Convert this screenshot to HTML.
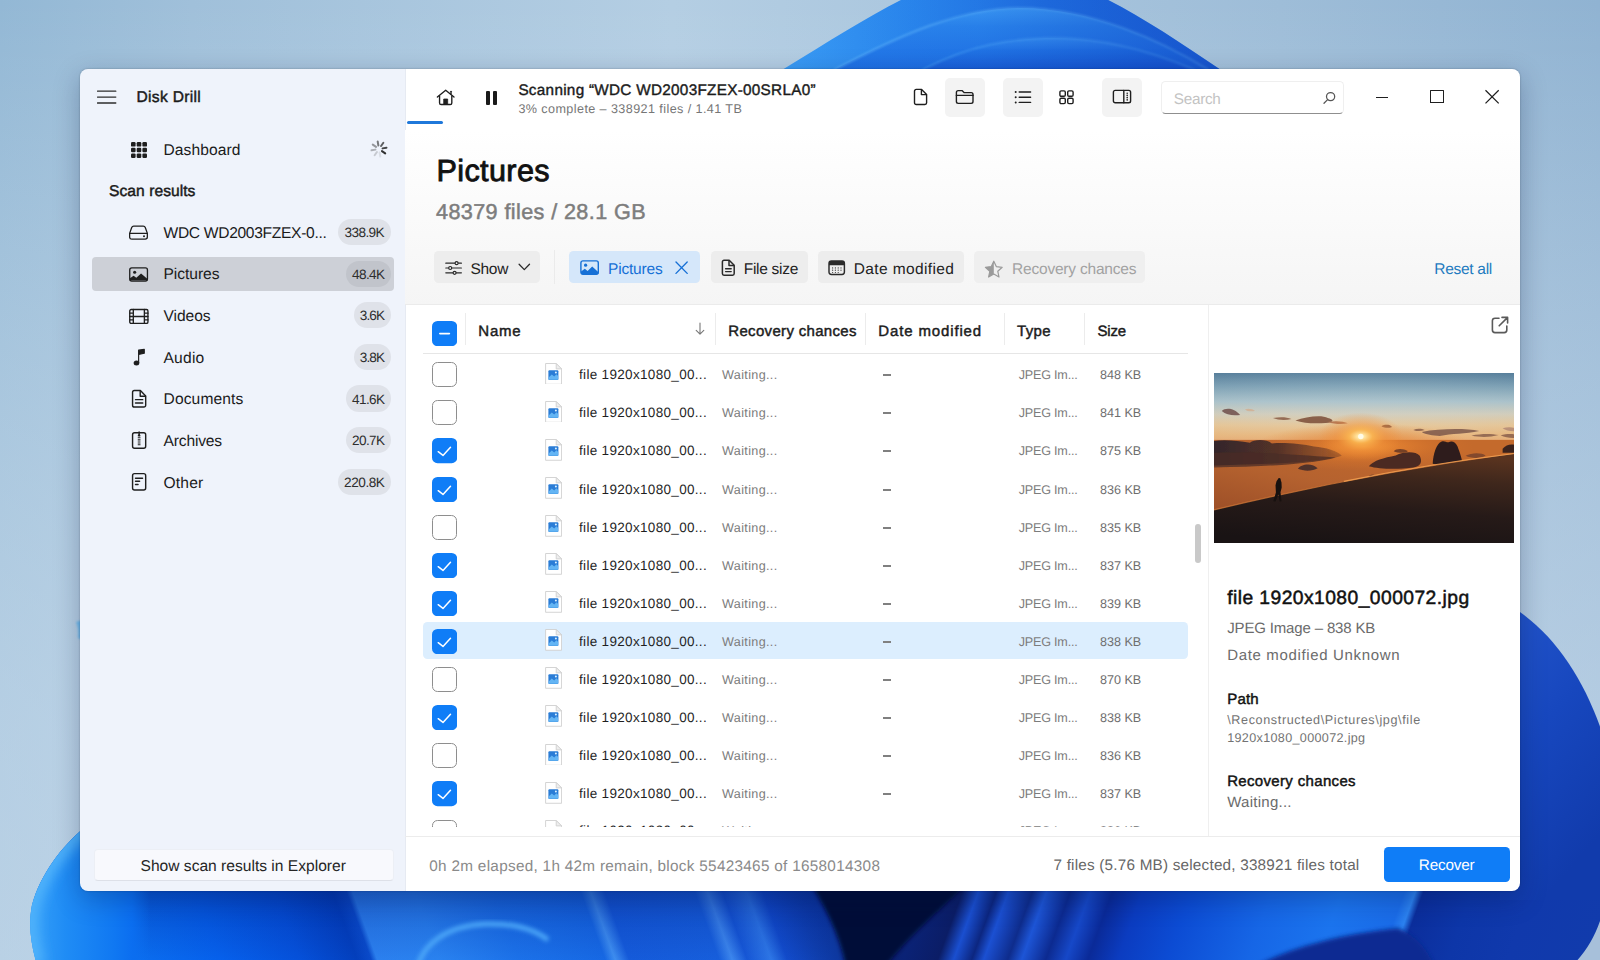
<!DOCTYPE html>
<html lang="en"><head><meta charset="utf-8"><title>Disk Drill</title>
<style>
html,body{margin:0;padding:0;}
body{width:1600px;height:960px;overflow:hidden;position:relative;background:#a9c4dc;font-family:"Liberation Sans",sans-serif;text-rendering:geometricPrecision;}
.b{position:absolute;box-sizing:border-box;}
.t{position:absolute;white-space:nowrap;}
#win{position:absolute;left:0;top:0;width:1600px;height:960px;clip-path:inset(69px 80px 69px 80px round 8px);}
</style></head><body>

<svg class="b" style="left:0;top:0" width="1600" height="960" viewBox="0 0 1600 960">
<defs>
<linearGradient id="bgx" x1="0" y1="0" x2="1" y2="0">
<stop offset="0" stop-color="#93b8d5"/><stop offset="0.12" stop-color="#a0c0da"/><stop offset="0.42" stop-color="#b4cee3"/>
<stop offset="0.8" stop-color="#9ebdd8"/><stop offset="1" stop-color="#90b3d2"/></linearGradient>
<linearGradient id="bgy" x1="0" y1="0" x2="0" y2="1">
<stop offset="0" stop-color="#ffffff" stop-opacity="0"/><stop offset="0.75" stop-color="#dfeaf5" stop-opacity="0.45"/><stop offset="1" stop-color="#dfeaf5" stop-opacity="0.5"/></linearGradient>
<linearGradient id="p1" x1="0" y1="0" x2="1" y2="0"><stop offset="0" stop-color="#3a9cf5"/><stop offset="0.3" stop-color="#2a88ee"/><stop offset="0.6" stop-color="#2174e4"/><stop offset="1" stop-color="#2070e2"/></linearGradient>
<linearGradient id="p2" x1="0" y1="0" x2="1" y2="0.3"><stop offset="0" stop-color="#3d9ef6"/><stop offset="0.5" stop-color="#2176e6"/><stop offset="1" stop-color="#185cd6"/></linearGradient>
<linearGradient id="p3" x1="0" y1="0" x2="1" y2="0.3"><stop offset="0" stop-color="#2f8af0"/><stop offset="0.5" stop-color="#1b68df"/><stop offset="1" stop-color="#1553cf"/></linearGradient>
<linearGradient id="pr" x1="0" y1="0" x2="0.4" y2="1"><stop offset="0" stop-color="#2456cc"/><stop offset="0.5" stop-color="#1747be"/><stop offset="1" stop-color="#113bac"/></linearGradient>
<linearGradient id="botA" gradientUnits="userSpaceOnUse" x1="30" y1="0" x2="870" y2="0" gradientTransform="translate(-330 0) skewX(20)"><stop offset="0.0000" stop-color="#3ea6f9"/><stop offset="0.0214" stop-color="#2090f6"/><stop offset="0.0833" stop-color="#0c72f1"/><stop offset="0.2024" stop-color="#0662ee"/><stop offset="0.2976" stop-color="#0552dc"/><stop offset="0.3667" stop-color="#0340be"/><stop offset="0.3833" stop-color="#0a4ccc"/><stop offset="0.3905" stop-color="#2c82f1"/><stop offset="0.4643" stop-color="#2a84f2"/><stop offset="0.5595" stop-color="#1c73eb"/><stop offset="0.6619" stop-color="#176ae6"/><stop offset="0.6738" stop-color="#3f90f2"/><stop offset="0.6905" stop-color="#155cdc"/><stop offset="0.7976" stop-color="#1760de"/><stop offset="0.8131" stop-color="#3d88ef"/><stop offset="0.8310" stop-color="#1658d8"/><stop offset="0.8595" stop-color="#2e78e8"/><stop offset="0.8786" stop-color="#124ccc"/><stop offset="0.9167" stop-color="#0f3fae"/><stop offset="0.9524" stop-color="#0c3498"/><stop offset="1.0000" stop-color="#0a2a88"/></linearGradient>
<linearGradient id="botB" gradientUnits="userSpaceOnUse" x1="800" y1="0" x2="1600" y2="0" gradientTransform="translate(337 0) skewX(-20)"><stop offset="0.0000" stop-color="#081c66"/><stop offset="0.1000" stop-color="#081c66"/><stop offset="0.1437" stop-color="#0a2276"/><stop offset="0.1875" stop-color="#0b1d66"/><stop offset="0.2075" stop-color="#1a4fd0"/><stop offset="0.2300" stop-color="#0c2680"/><stop offset="0.2450" stop-color="#1b50d2"/><stop offset="0.2750" stop-color="#0e2c8c"/><stop offset="0.2925" stop-color="#1d55d6"/><stop offset="0.3225" stop-color="#0c2a90"/><stop offset="0.3475" stop-color="#1648c8"/><stop offset="0.3750" stop-color="#0a2a98"/><stop offset="0.4125" stop-color="#0b3cc0"/><stop offset="0.4750" stop-color="#0c4cd4"/><stop offset="0.5750" stop-color="#1666e6"/><stop offset="0.6625" stop-color="#1b74ee"/><stop offset="0.7400" stop-color="#1a6ce8"/><stop offset="0.7538" stop-color="#2c82f0"/><stop offset="0.7638" stop-color="#0b2e9c"/><stop offset="0.8250" stop-color="#0d36a8"/><stop offset="0.9000" stop-color="#1039ac"/><stop offset="1.0000" stop-color="#113bac"/></linearGradient>
<linearGradient id="p2v" gradientUnits="userSpaceOnUse" x1="0" y1="8" x2="0" y2="70"><stop offset="0" stop-color="#3c9cf6"/><stop offset="0.3" stop-color="#2a86ee"/><stop offset="1" stop-color="#1f72e6"/></linearGradient>
<linearGradient id="p3v" gradientUnits="userSpaceOnUse" x1="0" y1="38" x2="0" y2="70"><stop offset="0" stop-color="#3592f3"/><stop offset="0.4" stop-color="#2278e8"/><stop offset="1" stop-color="#1a62dc"/></linearGradient>
<linearGradient id="pdark" gradientUnits="userSpaceOnUse" x1="782" y1="0" x2="1221" y2="0"><stop offset="0" stop-color="#0a2fb0" stop-opacity="0"/><stop offset="0.45" stop-color="#0a2fb0" stop-opacity="0.08"/><stop offset="1" stop-color="#0a2fb0" stop-opacity="0.42"/></linearGradient>
<linearGradient id="topdark" gradientUnits="userSpaceOnUse" x1="0" y1="885" x2="0" y2="965"><stop offset="0" stop-color="#02208a" stop-opacity="0.35"/><stop offset="1" stop-color="#02208a" stop-opacity="0"/></linearGradient>
<linearGradient id="lpet" gradientUnits="userSpaceOnUse" x1="30" y1="0" x2="150" y2="0"><stop offset="0" stop-color="#36a0f8"/><stop offset="0.3" stop-color="#1f8cf5"/><stop offset="0.7" stop-color="#1078f2"/><stop offset="0.85" stop-color="#0b6ef0"/><stop offset="1" stop-color="#0b6ef0" stop-opacity="0"/></linearGradient>
<clipPath id="lpc"><path d="M84,828 C62,846 40,875 32,905 C28,925 31,945 37,965 L150,965 L150,828 Z"/></clipPath>
<filter id="bl1"><feGaussianBlur stdDeviation="0.8"/></filter>
<filter id="bl2"><feGaussianBlur stdDeviation="2"/></filter>
<filter id="bl6"><feGaussianBlur stdDeviation="6"/></filter>
</defs>
<rect width="1600" height="960" fill="url(#bgx)"/>
<rect width="1600" height="960" fill="url(#bgy)"/>
<!-- top bloom -->
<path d="M782,70 C880,10 940,-30 1005,-30 C1070,-30 1140,15 1221,70 Z" fill="url(#p1)"/>
<path d="M834,70 C900,35 960,8 1020,8 C1090,8 1160,40 1209,70 Z" fill="url(#p2v)"/>
<path d="M834,70 C900,35 960,8 1020,8 C1090,8 1160,40 1209,70" stroke="#58b0fa" stroke-width="1.6" fill="none" stroke-opacity="0.8" filter="url(#bl1)"/>
<path d="M922,70 C970,45 1010,38 1055,38 C1110,38 1160,55 1195,70 Z" fill="url(#p3v)"/>
<path d="M922,70 C970,45 1010,38 1055,38 C1110,38 1160,55 1195,70" stroke="#4ea8f8" stroke-width="1.4" fill="none" stroke-opacity="0.75" filter="url(#bl1)"/>
<path d="M782,70 C880,10 940,-30 1005,-30 C1070,-30 1140,15 1221,70 Z" fill="url(#pdark)"/>
<!-- right petal -->
<!-- bottom -->
<rect x="860" y="880" width="750" height="85" fill="url(#botB)"/>
<path d="M1500,600 L1520,612 C1560,640 1590,690 1606,745 L1606,900 L1500,900 Z" fill="url(#pr)"/>
<path d="M1606,896 C1601,928 1589,948 1573,965 L1610,965 L1610,896 Z" fill="#a7c0da"/>
<path d="M84,828 C62,846 40,875 32,905 C28,925 31,945 37,965 L872,965 L872,880 L84,880 Z" fill="url(#botA)"/>
<path d="M84,828 C62,846 40,875 32,905 C28,925 31,945 37,965 L830,965 L830,880 L84,880 Z" fill="url(#topdark)"/>
<path d="M84,828 C62,846 40,875 32,905 C28,925 31,945 37,965 L150,965 L150,828 Z" fill="url(#lpet)"/>
<g clip-path="url(#lpc)"><path d="M86,826 C62,846 40,875 32,905 C28,925 31,945 37,965" stroke="#4fb2fb" stroke-width="16" fill="none" filter="url(#bl6)"/></g>
<path d="M76,622 C78,626 79,632 78,638 L82,640 L82,620 Z" fill="#62b6ee" opacity="0.85" filter="url(#bl1)"/>
<path d="M806,876 L976,876 C945,905 910,935 884,968 L846,968 C840,935 824,905 806,876 Z" fill="#040c38" filter="url(#bl2)"/>
<path d="M418,965 C424,945 445,926 485,924 C515,923 535,930 548,940" stroke="#4ba6f8" stroke-width="5" fill="none" filter="url(#bl2)"/>
<path d="M1258,965 C1290,948 1340,934 1398,928 C1415,935 1428,950 1434,965 Z" fill="#0a2a92" filter="url(#bl2)"/>
</svg>
<div class="b" style="left:80px;top:69px;width:1440px;height:822px;border-radius:8px;box-shadow:0 8px 26px 1px rgba(0,20,60,0.26),0 0 2px rgba(0,0,0,0.3);"></div>

<div id="win">
<div class="b" style="left:80px;top:69px;width:325.6px;height:822px;background:#eff3fb;border-radius:0px;"></div>
<div class="b" style="left:405.6px;top:69px;width:1114.4px;height:822px;background:#ffffff;border-radius:0px;"></div>
<div class="b" style="left:404.6px;top:69px;width:1.0px;height:822px;background:#e6eaf2;border-radius:0px;"></div>
<svg class="b" style="left:97px;top:90px;" width="20" height="14" viewBox="0 0 20 14"><path d="M0.5,1.2H18.8M0.5,7.1H18.8M0.5,13H18.8" stroke="#2e2e2e" stroke-width="1.3" fill="none" stroke-linecap="round"/></svg>
<span class="t" style="top:87px;font-size:15.6px;line-height:21px;color:#1b1b1b;letter-spacing:0.298px;left:136.50px;-webkit-text-stroke:0.45px #1b1b1b;">Disk Drill</span>
<svg class="b" style="left:131px;top:142px;" width="16" height="16" viewBox="0 0 16 16"><rect x="0.0" y="0.0" width="4.6" height="4.6" rx="1.2" fill="#1f1f1f"/><rect x="5.7" y="0.0" width="4.6" height="4.6" rx="1.2" fill="#1f1f1f"/><rect x="11.4" y="0.0" width="4.6" height="4.6" rx="1.2" fill="#1f1f1f"/><rect x="0.0" y="5.7" width="4.6" height="4.6" rx="1.2" fill="#1f1f1f"/><rect x="5.7" y="5.7" width="4.6" height="4.6" rx="1.2" fill="#1f1f1f"/><rect x="11.4" y="5.7" width="4.6" height="4.6" rx="1.2" fill="#1f1f1f"/><rect x="0.0" y="11.4" width="4.6" height="4.6" rx="1.2" fill="#1f1f1f"/><rect x="5.7" y="11.4" width="4.6" height="4.6" rx="1.2" fill="#1f1f1f"/><rect x="11.4" y="11.4" width="4.6" height="4.6" rx="1.2" fill="#1f1f1f"/></svg>
<span class="t" style="top:140px;font-size:15.6px;line-height:21px;color:#1b1b1b;letter-spacing:0.076px;left:163.50px;">Dashboard</span>
<svg class="b" style="left:369.2px;top:138.9px;" width="20" height="20" viewBox="0 0 20 20"><g transform="translate(10,10)"><line x1="0" y1="-3.6" x2="0" y2="-7.6" stroke="#262626" stroke-opacity="0.95" stroke-width="2" stroke-linecap="round" transform="rotate(125)"/><line x1="0" y1="-3.6" x2="0" y2="-7.6" stroke="#262626" stroke-opacity="0.85" stroke-width="2" stroke-linecap="round" transform="rotate(80)"/><line x1="0" y1="-3.6" x2="0" y2="-7.6" stroke="#262626" stroke-opacity="0.72" stroke-width="2" stroke-linecap="round" transform="rotate(35)"/><line x1="0" y1="-3.6" x2="0" y2="-7.6" stroke="#262626" stroke-opacity="0.6" stroke-width="2" stroke-linecap="round" transform="rotate(-10)"/><line x1="0" y1="-3.6" x2="0" y2="-7.6" stroke="#262626" stroke-opacity="0.45" stroke-width="2" stroke-linecap="round" transform="rotate(-55)"/><line x1="0" y1="-3.6" x2="0" y2="-7.6" stroke="#262626" stroke-opacity="0.33" stroke-width="2" stroke-linecap="round" transform="rotate(-100)"/><line x1="0" y1="-3.6" x2="0" y2="-7.6" stroke="#262626" stroke-opacity="0.2" stroke-width="2" stroke-linecap="round" transform="rotate(-145)"/><line x1="0" y1="-3.6" x2="0" y2="-7.6" stroke="#262626" stroke-opacity="0.1" stroke-width="2" stroke-linecap="round" transform="rotate(-190)"/></g></svg>
<span class="t" style="top:181px;font-size:15.6px;line-height:21px;color:#1b1b1b;letter-spacing:0.055px;left:109.00px;-webkit-text-stroke:0.45px #1b1b1b;">Scan results</span>
<div class="b" style="left:92px;top:257px;width:302px;height:34px;background:#cdd0d7;border-radius:4px;"></div>
<span class="t" style="top:223px;font-size:15.6px;line-height:21px;color:#1b1b1b;letter-spacing:-0.317px;left:163.50px;">WDC WD2003FZEX-0...</span>
<div class="b" style="left:338px;top:218.8px;width:52.5px;height:26.399999999999977px;background:#dfe2e9;border-radius:13.2px;"></div>
<span class="t" style="top:223px;font-size:13.6px;line-height:19px;color:#2e2e2e;letter-spacing:-0.601px;left:344.50px;">338.9K</span>
<span class="t" style="top:264px;font-size:15.6px;line-height:21px;color:#1b1b1b;letter-spacing:-0.044px;left:163.50px;">Pictures</span>
<div class="b" style="left:346px;top:260.5px;width:44.5px;height:26.399999999999977px;background:#c1c4cb;border-radius:13.2px;"></div>
<span class="t" style="top:265px;font-size:13.6px;line-height:19px;color:#2e2e2e;letter-spacing:-0.608px;left:352.00px;">48.4K</span>
<span class="t" style="top:306px;font-size:15.6px;line-height:21px;color:#1b1b1b;letter-spacing:-0.070px;left:163.50px;">Videos</span>
<div class="b" style="left:353.5px;top:302.1px;width:37.0px;height:26.399999999999977px;background:#dfe2e9;border-radius:13.2px;"></div>
<span class="t" style="top:306px;font-size:13.6px;line-height:19px;color:#2e2e2e;letter-spacing:-0.869px;left:359.75px;">3.6K</span>
<span class="t" style="top:348px;font-size:15.6px;line-height:21px;color:#1b1b1b;letter-spacing:0.220px;left:163.50px;">Audio</span>
<div class="b" style="left:353.5px;top:343.8px;width:37.0px;height:26.399999999999977px;background:#dfe2e9;border-radius:13.2px;"></div>
<span class="t" style="top:348px;font-size:13.6px;line-height:19px;color:#2e2e2e;letter-spacing:-0.869px;left:359.75px;">3.8K</span>
<span class="t" style="top:389px;font-size:15.6px;line-height:21px;color:#1b1b1b;letter-spacing:0.122px;left:163.50px;">Documents</span>
<div class="b" style="left:346px;top:385.40000000000003px;width:44.5px;height:26.399999999999977px;background:#dfe2e9;border-radius:13.2px;"></div>
<span class="t" style="top:390px;font-size:13.6px;line-height:19px;color:#2e2e2e;letter-spacing:-0.608px;left:352.00px;">41.6K</span>
<span class="t" style="top:431px;font-size:15.6px;line-height:21px;color:#1b1b1b;letter-spacing:-0.165px;left:163.50px;">Archives</span>
<div class="b" style="left:346px;top:427.0px;width:44.5px;height:26.399999999999977px;background:#dfe2e9;border-radius:13.2px;"></div>
<span class="t" style="top:431px;font-size:13.6px;line-height:19px;color:#2e2e2e;letter-spacing:-0.608px;left:352.00px;">20.7K</span>
<span class="t" style="top:473px;font-size:15.6px;line-height:21px;color:#1b1b1b;letter-spacing:0.197px;left:163.50px;">Other</span>
<div class="b" style="left:338px;top:468.6px;width:52.5px;height:26.399999999999977px;background:#dfe2e9;border-radius:13.2px;"></div>
<span class="t" style="top:473px;font-size:13.6px;line-height:19px;color:#2e2e2e;letter-spacing:-0.434px;left:344.00px;">220.8K</span>
<svg class="b" style="left:129.10px;top:225.26px" width="19.90" height="15.80" viewBox="0 0 22 18" preserveAspectRatio="none"><path d="M5.2,1.2H15.8Q17.4,1.2 18,2.8L20.3,9.5V13.8A2.4,2.4 0 0 1 17.9,16.2H3.1A2.4,2.4 0 0 1 0.7,13.8V9.5L3,2.8Q3.6,1.2 5.2,1.2Z" stroke="#1f1f1f" stroke-width="1.45" fill="none" stroke-linejoin="round" stroke-linecap="round"/><path d="M0.9,9.6H20.1" stroke="#1f1f1f" stroke-width="1.45" fill="none" stroke-linejoin="round" stroke-linecap="round"/><circle cx="16.6" cy="12.9" r="1.1" fill="#1f1f1f"/></svg>
<svg class="b" style="left:129.01px;top:266.73px" width="20.10" height="16.20" viewBox="0 0 22 18" preserveAspectRatio="none"><rect x="0.8" y="1" width="19.4" height="14.6" rx="2.2" stroke="#1f1f1f" stroke-width="1.45" fill="none" stroke-linejoin="round" stroke-linecap="round"/><circle cx="6.2" cy="5.8" r="1.7" fill="#1f1f1f"/><path d="M1,15V12.5L5,9.6L8,12L13.2,7.2L20,13V15Z" fill="#1f1f1f"/></svg>
<svg class="b" style="left:129.01px;top:307.51px" width="20.63" height="17.77" viewBox="0 0 22 18" preserveAspectRatio="none"><rect x="0.8" y="1.6" width="19.4" height="14" rx="1.5" stroke="#1f1f1f" stroke-width="1.45" fill="none" stroke-linejoin="round" stroke-linecap="round"/><path d="M4.6,1.6V15.6M16.4,1.6V15.6M4.6,8.6H16.4M0.8,5.2H4.6M0.8,8.6H4.6M0.8,12H4.6M16.4,5.2H20.2M16.4,8.6H20.2M16.4,12H20.2" stroke="#1f1f1f" stroke-width="1.45" fill="none" stroke-linejoin="round" stroke-linecap="round"/></svg>
<svg class="b" style="left:131.54px;top:348.40px" width="15.58" height="20.12" viewBox="0 0 16 20" preserveAspectRatio="none"><ellipse cx="4.6" cy="15" rx="2.9" ry="2.5" fill="#1f1f1f"/><path d="M6.8,15V2.2L12.6,1.4V5.2L6.8,6.4" fill="#1f1f1f" stroke="#1f1f1f" stroke-width="1.2" stroke-linejoin="round"/></svg>
<svg class="b" style="left:130.62px;top:389.08px" width="17.64" height="20.45" viewBox="0 0 18 20" preserveAspectRatio="none"><path d="M3.4,1.4H9.6L15,6.8V15.8A1.8,1.8 0 0 1 13.2,17.6H3.4A1.8,1.8 0 0 1 1.6,15.8V3.2A1.8,1.8 0 0 1 3.4,1.4Z" stroke="#1f1f1f" stroke-width="1.45" fill="none" stroke-linejoin="round" stroke-linecap="round"/><path d="M9.4,1.6V7H14.8" stroke="#1f1f1f" stroke-width="1.45" fill="none" stroke-linejoin="round" stroke-linecap="round"/><path d="M4.6,10.4H12M4.6,13.6H12" stroke="#1f1f1f" stroke-width="1.45" fill="none" stroke-linejoin="round" stroke-linecap="round"/></svg>
<svg class="b" style="left:130.62px;top:431.31px" width="17.64" height="19.56" viewBox="0 0 18 20" preserveAspectRatio="none"><rect x="1.6" y="1.8" width="13.4" height="15.8" rx="2" stroke="#1f1f1f" stroke-width="1.45" fill="none" stroke-linejoin="round" stroke-linecap="round"/><path d="M8.3,1V4" stroke="#1f1f1f" stroke-width="1.45" fill="none" stroke-linejoin="round" stroke-linecap="round"/><circle cx="8.3" cy="4.4" r="1.2" fill="#1f1f1f"/><path d="M8.3,6V15.5" stroke="#1f1f1f" stroke-width="2.8" stroke-dasharray="1 0.9" fill="none"/></svg>
<svg class="b" style="left:130.62px;top:472.38px" width="17.64" height="20.34" viewBox="0 0 18 20" preserveAspectRatio="none"><rect x="1.6" y="1.6" width="13.4" height="16.2" rx="2" stroke="#1f1f1f" stroke-width="1.45" fill="none" stroke-linejoin="round" stroke-linecap="round"/><path d="M4.6,6.2H11.8M4.6,9.2H8.8M4.6,12.2H7.2" stroke="#1f1f1f" stroke-width="1.45" fill="none" stroke-linejoin="round" stroke-linecap="round"/></svg>
<div class="b" style="left:94px;top:849px;width:300px;height:32px;background:#f8f9fd;border-radius:4px;border:1px solid #eceff5;border-bottom-color:#dde0e8;"></div>
<span class="t" style="top:856px;font-size:15.6px;line-height:21px;color:#262626;letter-spacing:0.000px;left:140.50px;">Show scan results in Explorer</span>
<div class="b" style="left:405px;top:130px;width:1115px;height:175px;background:linear-gradient(180deg,#ffffff 0%,#f5f5f5 100%);border-radius:0px;"></div>
<div class="b" style="left:405px;top:304px;width:1115px;height:1px;background:#ebebeb;border-radius:0px;"></div>
<div class="b" style="left:406.5px;top:121px;width:36.80000000000001px;height:3px;background:#1f78da;border-radius:1.5px;"></div>
<svg class="b" style="left:436.31px;top:88.61px" width="19.78" height="17.66" viewBox="0 0 20 18" preserveAspectRatio="none"><path d="M1.4,8.2L9.8,1.3L18.2,8.2" stroke="#1f1f1f" stroke-width="1.4" fill="none" stroke-linejoin="round" stroke-linecap="round"/><path d="M3.6,7V14.2A1.6,1.6 0 0 0 5.2,15.8H14.4A1.6,1.6 0 0 0 16,14.2V7" stroke="#1f1f1f" stroke-width="1.4" fill="none" stroke-linejoin="round" stroke-linecap="round"/><path d="M7.8,15.8V10.2H11.8V15.8Z" fill="#1f1f1f" stroke="#1f1f1f" stroke-width="0.8" stroke-linejoin="round"/><path d="M15.2,2.4V5" stroke="#1f1f1f" stroke-width="1.4" fill="none" stroke-linejoin="round" stroke-linecap="round"/></svg>
<div class="b" style="left:485.6px;top:91px;width:4.199999999999989px;height:14px;background:#1a1a1a;border-radius:1px;"></div>
<div class="b" style="left:492.8px;top:91px;width:4.0px;height:14px;background:#1a1a1a;border-radius:1px;"></div>
<span class="t" style="top:80px;font-size:15.3px;line-height:21px;color:#1b1b1b;letter-spacing:0.280px;left:518.40px;-webkit-text-stroke:0.4px #1b1b1b;">Scanning “WDC WD2003FZEX-00SRLA0”</span>
<span class="t" style="top:100px;font-size:12.6px;line-height:18px;color:#767676;letter-spacing:0.411px;left:518.40px;">3% complete – 338921 files / 1.41 TB</span>
<svg class="b" style="left:913px;top:88px;" width="16" height="18" viewBox="0 0 16 18"><path d="M3.2,1.4H8.6L13.6,6.4V14.8A1.7,1.7 0 0 1 11.9,16.5H3.2A1.7,1.7 0 0 1 1.5,14.8V3.1A1.7,1.7 0 0 1 3.2,1.4Z" stroke="#1f1f1f" stroke-width="1.4" fill="none" stroke-linejoin="round" stroke-linecap="round"/><path d="M8.4,1.6V6.6H13.4" stroke="#1f1f1f" stroke-width="1.4" fill="none" stroke-linejoin="round" stroke-linecap="round"/></svg>
<div class="b" style="left:945px;top:77.5px;width:40px;height:39.0px;background:#f3f3f3;border-radius:5px;"></div>
<svg class="b" style="left:955px;top:88.5px;" width="20" height="16" viewBox="0 0 20 16"><path d="M1.4,4.2V3.4A1.8,1.8 0 0 1 3.2,1.6H7L9,3.6H16.2A1.8,1.8 0 0 1 18,5.4V12.6A1.8,1.8 0 0 1 16.2,14.4H3.2A1.8,1.8 0 0 1 1.4,12.6Z" stroke="#1f1f1f" stroke-width="1.4" fill="none" stroke-linejoin="round" stroke-linecap="round"/><path d="M1.4,6.4H18" stroke="#1f1f1f" stroke-width="1.4" fill="none" stroke-linejoin="round" stroke-linecap="round"/></svg>
<div class="b" style="left:1003px;top:77.5px;width:40px;height:39.0px;background:#f3f3f3;border-radius:5px;"></div>
<svg class="b" style="left:1014px;top:89.5px;" width="18" height="14" viewBox="0 0 18 14"><path d="M5.2,2H16.6M5.2,7.2H16.6M5.2,12.4H16.6" stroke="#1f1f1f" stroke-width="1.4" fill="none" stroke-linejoin="round" stroke-linecap="round"/><circle cx="1.7" cy="2" r="1" fill="#1f1f1f"/><circle cx="1.7" cy="7.2" r="1" fill="#1f1f1f"/><circle cx="1.7" cy="12.4" r="1" fill="#1f1f1f"/></svg>
<svg class="b" style="left:1059px;top:89.5px;" width="16" height="15" viewBox="0 0 16 15"><rect x="0.9" y="0.9" width="5.4" height="5.4" rx="1.3" stroke="#1f1f1f" stroke-width="1.4" fill="none" stroke-linejoin="round" stroke-linecap="round"/><rect x="8.7" y="0.9" width="5.4" height="5.4" rx="1.3" stroke="#1f1f1f" stroke-width="1.4" fill="none" stroke-linejoin="round" stroke-linecap="round"/><rect x="0.9" y="8.2" width="5.4" height="5.4" rx="1.3" stroke="#1f1f1f" stroke-width="1.4" fill="none" stroke-linejoin="round" stroke-linecap="round"/><rect x="8.7" y="8.2" width="5.4" height="5.4" rx="1.3" stroke="#1f1f1f" stroke-width="1.4" fill="none" stroke-linejoin="round" stroke-linecap="round"/></svg>
<div class="b" style="left:1102px;top:77.5px;width:39.5px;height:39.0px;background:#f3f3f3;border-radius:5px;"></div>
<svg class="b" style="left:1112px;top:89px;" width="20" height="16" viewBox="0 0 20 16"><rect x="1.4" y="1.4" width="17.2" height="12.4" rx="1.8" stroke="#1f1f1f" stroke-width="1.4" fill="none" stroke-linejoin="round" stroke-linecap="round"/><path d="M11.8,1.4V13.8" stroke="#1f1f1f" stroke-width="1.4" fill="none" stroke-linejoin="round" stroke-linecap="round"/><path d="M15.2,4.2V4.3M15.2,6.4V6.5M15.2,8.6V8.7M15.2,10.8V10.9" stroke="#1f1f1f" stroke-width="1.6" stroke-linecap="round"/></svg>
<div class="b" style="left:1160.5px;top:80.5px;width:183.0px;height:33.5px;background:#ffffff;border-radius:4.5px;border:1px solid #efefef;border-bottom:1.5px solid #8f8f8f;"></div>
<span class="t" style="top:89px;font-size:15.3px;line-height:21px;color:#c3c3c3;letter-spacing:-0.280px;left:1173.80px;">Search</span>
<svg class="b" style="left:1322px;top:90.5px;" width="15" height="14" viewBox="0 0 15 14"><circle cx="8.6" cy="5.6" r="4.1" stroke="#555" stroke-width="1.25" fill="none"/><path d="M5.6,8.6L2,12.3" stroke="#555" stroke-width="1.25" stroke-linecap="round"/></svg>
<div class="b" style="left:1376px;top:96.7px;width:12.200000000000045px;height:1.2000000000000028px;background:#1f1f1f;border-radius:0px;"></div>
<div class="b" style="left:1430.3px;top:90.2px;width:13.5px;height:13.200000000000003px;background:transparent;border-radius:0.5px;border:1.25px solid #1f1f1f;"></div>
<svg class="b" style="left:1484px;top:89px;" width="16" height="16" viewBox="0 0 16 16"><path d="M1.5,1.3L14.7,14.4M14.7,1.3L1.5,14.4" stroke="#1f1f1f" stroke-width="1.25" fill="none"/></svg>
<span class="t" style="top:152px;font-size:30.6px;line-height:38px;color:#111;letter-spacing:0.370px;left:436.50px;-webkit-text-stroke:0.85px #111;">Pictures</span>
<span class="t" style="top:197px;font-size:21.6px;line-height:29px;color:#7d7d7d;letter-spacing:0.394px;left:436.00px;-webkit-text-stroke:0.5px #7d7d7d;">48379 files / 28.1 GB</span>
<div class="b" style="left:434px;top:251.1px;width:106px;height:31.900000000000006px;background:#ededed;border-radius:4.5px;"></div>
<svg class="b" style="left:445px;top:260.5px;" width="18" height="14" viewBox="0 0 18 14"><path d="M0.8,2.2H16.4M0.8,7H16.4M0.8,11.8H16.4" stroke="#2a2a2a" stroke-width="1.2" fill="none" stroke-linecap="round"/><circle cx="11.6" cy="2.2" r="1.5" fill="#ededed" stroke="#2a2a2a" stroke-width="1.2"/><circle cx="5.2" cy="7" r="1.5" fill="#ededed" stroke="#2a2a2a" stroke-width="1.2"/><circle cx="9.6" cy="11.8" r="1.5" fill="#ededed" stroke="#2a2a2a" stroke-width="1.2"/></svg>
<span class="t" style="top:259px;font-size:15.5px;line-height:21px;color:#222;letter-spacing:-0.318px;left:470.50px;">Show</span>
<svg class="b" style="left:518.4px;top:263.3px;" width="14" height="9" viewBox="0 0 14 9"><path d="M1.1,1.3L6.3,6.6L11.5,1.3" stroke="#2a2a2a" stroke-width="1.3" fill="none" stroke-linecap="round" stroke-linejoin="round"/></svg>
<div class="b" style="left:554px;top:250px;width:1px;height:33.5px;background:#ebebeb;border-radius:0px;"></div>
<div class="b" style="left:569.3px;top:251.1px;width:130.70000000000005px;height:31.900000000000006px;background:#d5e7fa;border-radius:4.5px;"></div>
<svg class="b" style="left:580px;top:259.5px;" width="20" height="16" viewBox="0 0 20 16"><rect x="0.9" y="0.9" width="17.4" height="13.4" rx="2" stroke="#1670d6" stroke-width="1.4" fill="none"/><circle cx="5.6" cy="5.2" r="1.6" fill="#1670d6"/><path d="M1,14V11.6L4.8,8.8L7.6,11L12.2,6.6L18.2,12V14Z" fill="#1670d6"/></svg>
<span class="t" style="top:259px;font-size:15.5px;line-height:21px;color:#1670d6;letter-spacing:-0.186px;left:608.00px;">Pictures</span>
<svg class="b" style="left:675px;top:261.3px;" width="14" height="14" viewBox="0 0 14 14"><path d="M1,1L12.2,12.4M12.2,1L1,12.4" stroke="#1670d6" stroke-width="1.35" fill="none" stroke-linecap="round"/></svg>
<div class="b" style="left:710.5px;top:251.1px;width:97.0px;height:31.900000000000006px;background:#ededed;border-radius:4.5px;"></div>
<svg class="b" style="left:720.5px;top:259.3px;" width="16" height="18" viewBox="0 0 16 18"><path d="M3,1.2H8.2L13.2,6.2V14.6A1.6,1.6 0 0 1 11.6,16.2H3A1.6,1.6 0 0 1 1.4,14.6V2.8A1.6,1.6 0 0 1 3,1.2Z" stroke="#2a2a2a" stroke-width="1.5" fill="none" stroke-linejoin="round"/><path d="M8,1.4V6.4H13" stroke="#2a2a2a" stroke-width="1.5" fill="none" stroke-linejoin="round"/><path d="M4.6,9.8H10.2M4.6,12.6H10.2" stroke="#2a2a2a" stroke-width="1.4" fill="none" stroke-linecap="round"/></svg>
<span class="t" style="top:259px;font-size:15.5px;line-height:21px;color:#222;letter-spacing:-0.294px;left:743.80px;">File size</span>
<div class="b" style="left:817.5px;top:251.1px;width:146.29999999999995px;height:31.900000000000006px;background:#ededed;border-radius:4.5px;"></div>
<svg class="b" style="left:828px;top:259.8px;" width="18" height="16" viewBox="0 0 18 16"><rect x="1" y="1" width="15.4" height="13.4" rx="2.4" stroke="#2a2a2a" stroke-width="1.45" fill="none"/><path d="M1,3.2Q1,1 3.2,1H14.2Q16.4,1 16.4,3.2V5.2H1Z" fill="#2a2a2a"/><circle cx="4.6" cy="7.9" r="0.62" fill="#3a3a3a"/><circle cx="7.4" cy="7.9" r="0.62" fill="#3a3a3a"/><circle cx="10.2" cy="7.9" r="0.62" fill="#3a3a3a"/><circle cx="13.0" cy="7.9" r="0.62" fill="#3a3a3a"/><circle cx="4.6" cy="10.2" r="0.62" fill="#3a3a3a"/><circle cx="7.4" cy="10.2" r="0.62" fill="#3a3a3a"/><circle cx="10.2" cy="10.2" r="0.62" fill="#3a3a3a"/><circle cx="13.0" cy="10.2" r="0.62" fill="#3a3a3a"/><circle cx="4.6" cy="12.5" r="0.62" fill="#3a3a3a"/><circle cx="7.4" cy="12.5" r="0.62" fill="#3a3a3a"/><circle cx="10.2" cy="12.5" r="0.62" fill="#3a3a3a"/></svg>
<span class="t" style="top:259px;font-size:15.5px;line-height:21px;color:#222;letter-spacing:0.374px;left:853.80px;">Date modified</span>
<div class="b" style="left:973.8px;top:251.1px;width:171.70000000000005px;height:31.900000000000006px;background:#efefef;border-radius:4.5px;"></div>
<svg class="b" style="left:984px;top:259.5px;" width="20" height="18" viewBox="0 0 20 18"><path d="M9.8,1.2L12.3,6.6L18.2,7.3L13.8,11.3L15,17L9.8,14.1L4.6,17L5.8,11.3L1.4,7.3L7.3,6.6Z" stroke="#9a9a9a" stroke-width="1.2" fill="none" stroke-linejoin="round"/><path d="M9.8,1.2L7.3,6.6L1.4,7.3L5.8,11.3L4.6,17L9.8,14.1Z" fill="#9a9a9a"/></svg>
<span class="t" style="top:259px;font-size:15.5px;line-height:21px;color:#a2a2a2;letter-spacing:-0.200px;left:1012.00px;">Recovery chances</span>
<span class="t" style="top:259px;font-size:15.5px;line-height:21px;color:#1f7bc0;letter-spacing:-0.289px;left:1434.30px;">Reset all</span>
<svg class="b" style="left:431.90px;top:320.80px" width="25.2" height="25.2" viewBox="0 0 25.2 25.2"><rect width="25.2" height="25.2" rx="5.5" fill="#0f7df7"/><path d="M7.8,12.6H17.4" stroke="#fff" stroke-width="1.6" fill="none" stroke-linecap="round"/></svg>
<div class="b" style="left:465px;top:312.5px;width:1px;height:32.5px;background:#ececec;border-radius:0px;"></div>
<div class="b" style="left:715px;top:312.5px;width:1px;height:32.5px;background:#ececec;border-radius:0px;"></div>
<div class="b" style="left:865px;top:312.5px;width:1px;height:32.5px;background:#ececec;border-radius:0px;"></div>
<div class="b" style="left:1004px;top:312.5px;width:1px;height:32.5px;background:#ececec;border-radius:0px;"></div>
<div class="b" style="left:1084px;top:312.5px;width:1px;height:32.5px;background:#ececec;border-radius:0px;"></div>
<span class="t" style="top:321px;font-size:15px;line-height:21px;color:#1b1b1b;letter-spacing:0.747px;left:478.30px;-webkit-text-stroke:0.45px #1b1b1b;">Name</span>
<span class="t" style="top:321px;font-size:15px;line-height:21px;color:#1b1b1b;letter-spacing:0.319px;left:728.30px;-webkit-text-stroke:0.45px #1b1b1b;">Recovery chances</span>
<span class="t" style="top:321px;font-size:15px;line-height:21px;color:#1b1b1b;letter-spacing:0.858px;left:878.30px;-webkit-text-stroke:0.45px #1b1b1b;">Date modified</span>
<span class="t" style="top:321px;font-size:15px;line-height:21px;color:#1b1b1b;letter-spacing:0.370px;left:1017.00px;-webkit-text-stroke:0.45px #1b1b1b;">Type</span>
<span class="t" style="top:321px;font-size:15px;line-height:21px;color:#1b1b1b;letter-spacing:-0.170px;left:1097.50px;-webkit-text-stroke:0.45px #1b1b1b;">Size</span>
<svg class="b" style="left:694px;top:322px;" width="12" height="14" viewBox="0 0 12 14"><path d="M6,1V12M2.2,8.4L6,12.2L9.8,8.4" stroke="#777" stroke-width="1.1" fill="none" stroke-linecap="round" stroke-linejoin="round"/></svg>
<div class="b" style="left:422.5px;top:353.2px;width:765.0px;height:1.1000000000000227px;background:#e6e6e6;border-radius:0px;"></div>
<div class="b" style="left:405px;top:355px;width:803px;height:472.3px;overflow:hidden;"><div class="b" style="left:-405px;top:-355px;width:1600px;height:960px;">
<div class="b" style="left:431.90px;top:362.20px;width:25.2px;height:25.2px;border:1.5px solid #8e8e8e;border-radius:5.5px;background:#fff;"></div>
<svg class="b" style="left:544.7px;top:362.5px;" width="17.2" height="21.8" viewBox="0 0 17.2 21.8"><path d="M0.6,0.5H11.2L16.6,5.9V21.3H0.6Z" fill="#fff" stroke="#cfcfcf" stroke-width="0.9" stroke-linejoin="round"/><path d="M11.2,0.5V5.9H16.6Z" fill="#eeeeee" stroke="#cfcfcf" stroke-width="0.9" stroke-linejoin="round"/><rect x="3.4" y="7.2" width="10" height="9.7" rx="1" fill="#2a7cd6"/><path d="M3.6,16.7V14.4L6.8,11.4L9.2,13.5L11.4,11.3L13.2,12.9V16.7Z" fill="#64b5f4"/><circle cx="10.9" cy="9.4" r="1" fill="#dbf0ff"/></svg>
<span class="t" style="top:365px;font-size:13.5px;line-height:19px;color:#1f1f1f;letter-spacing:0.320px;left:579.00px;">file 1920x1080_00...</span>
<span class="t" style="top:366px;font-size:12.6px;line-height:18px;color:#7c7c7c;letter-spacing:0.355px;left:722.00px;">Waiting...</span>
<div class="b" style="left:883.3px;top:374px;width:8.0px;height:1.5px;background:#808080;border-radius:0px;"></div>
<span class="t" style="top:366px;font-size:12.6px;line-height:18px;color:#7c7c7c;letter-spacing:-0.221px;left:1018.80px;">JPEG Im...</span>
<span class="t" style="top:366px;font-size:12.6px;line-height:18px;color:#6e6e6e;letter-spacing:-0.022px;left:1100.00px;">848 KB</span>
<div class="b" style="left:431.90px;top:400.31px;width:25.2px;height:25.2px;border:1.5px solid #8e8e8e;border-radius:5.5px;background:#fff;"></div>
<svg class="b" style="left:544.7px;top:400.61px;" width="17.2" height="21.8" viewBox="0 0 17.2 21.8"><path d="M0.6,0.5H11.2L16.6,5.9V21.3H0.6Z" fill="#fff" stroke="#cfcfcf" stroke-width="0.9" stroke-linejoin="round"/><path d="M11.2,0.5V5.9H16.6Z" fill="#eeeeee" stroke="#cfcfcf" stroke-width="0.9" stroke-linejoin="round"/><rect x="3.4" y="7.2" width="10" height="9.7" rx="1" fill="#2a7cd6"/><path d="M3.6,16.7V14.4L6.8,11.4L9.2,13.5L11.4,11.3L13.2,12.9V16.7Z" fill="#64b5f4"/><circle cx="10.9" cy="9.4" r="1" fill="#dbf0ff"/></svg>
<span class="t" style="top:403px;font-size:13.5px;line-height:19px;color:#1f1f1f;letter-spacing:0.320px;left:579.00px;">file 1920x1080_00...</span>
<span class="t" style="top:404px;font-size:12.6px;line-height:18px;color:#7c7c7c;letter-spacing:0.355px;left:722.00px;">Waiting...</span>
<div class="b" style="left:883.3px;top:412px;width:8.0px;height:1.5px;background:#808080;border-radius:0px;"></div>
<span class="t" style="top:404px;font-size:12.6px;line-height:18px;color:#7c7c7c;letter-spacing:-0.221px;left:1018.80px;">JPEG Im...</span>
<span class="t" style="top:404px;font-size:12.6px;line-height:18px;color:#6e6e6e;letter-spacing:-0.022px;left:1100.00px;">841 KB</span>
<svg class="b" style="left:431.90px;top:438.42px" width="25.2" height="25.2" viewBox="0 0 25.2 25.2"><rect width="25.2" height="25.2" rx="5.5" fill="#0f7df7"/><path d="M6.2,13.7L11,17.4L18.5,9.2" stroke="#fff" stroke-width="1.5" fill="none" stroke-linecap="round" stroke-linejoin="round"/></svg>
<svg class="b" style="left:544.7px;top:438.71999999999997px;" width="17.2" height="21.8" viewBox="0 0 17.2 21.8"><path d="M0.6,0.5H11.2L16.6,5.9V21.3H0.6Z" fill="#fff" stroke="#cfcfcf" stroke-width="0.9" stroke-linejoin="round"/><path d="M11.2,0.5V5.9H16.6Z" fill="#eeeeee" stroke="#cfcfcf" stroke-width="0.9" stroke-linejoin="round"/><rect x="3.4" y="7.2" width="10" height="9.7" rx="1" fill="#2a7cd6"/><path d="M3.6,16.7V14.4L6.8,11.4L9.2,13.5L11.4,11.3L13.2,12.9V16.7Z" fill="#64b5f4"/><circle cx="10.9" cy="9.4" r="1" fill="#dbf0ff"/></svg>
<span class="t" style="top:441px;font-size:13.5px;line-height:19px;color:#1f1f1f;letter-spacing:0.320px;left:579.00px;">file 1920x1080_00...</span>
<span class="t" style="top:442px;font-size:12.6px;line-height:18px;color:#7c7c7c;letter-spacing:0.355px;left:722.00px;">Waiting...</span>
<div class="b" style="left:883.3px;top:450px;width:8.0px;height:1.5px;background:#808080;border-radius:0px;"></div>
<span class="t" style="top:442px;font-size:12.6px;line-height:18px;color:#7c7c7c;letter-spacing:-0.221px;left:1018.80px;">JPEG Im...</span>
<span class="t" style="top:442px;font-size:12.6px;line-height:18px;color:#6e6e6e;letter-spacing:-0.022px;left:1100.00px;">875 KB</span>
<svg class="b" style="left:431.90px;top:476.53px" width="25.2" height="25.2" viewBox="0 0 25.2 25.2"><rect width="25.2" height="25.2" rx="5.5" fill="#0f7df7"/><path d="M6.2,13.7L11,17.4L18.5,9.2" stroke="#fff" stroke-width="1.5" fill="none" stroke-linecap="round" stroke-linejoin="round"/></svg>
<svg class="b" style="left:544.7px;top:476.83px;" width="17.2" height="21.8" viewBox="0 0 17.2 21.8"><path d="M0.6,0.5H11.2L16.6,5.9V21.3H0.6Z" fill="#fff" stroke="#cfcfcf" stroke-width="0.9" stroke-linejoin="round"/><path d="M11.2,0.5V5.9H16.6Z" fill="#eeeeee" stroke="#cfcfcf" stroke-width="0.9" stroke-linejoin="round"/><rect x="3.4" y="7.2" width="10" height="9.7" rx="1" fill="#2a7cd6"/><path d="M3.6,16.7V14.4L6.8,11.4L9.2,13.5L11.4,11.3L13.2,12.9V16.7Z" fill="#64b5f4"/><circle cx="10.9" cy="9.4" r="1" fill="#dbf0ff"/></svg>
<span class="t" style="top:480px;font-size:13.5px;line-height:19px;color:#1f1f1f;letter-spacing:0.320px;left:579.00px;">file 1920x1080_00...</span>
<span class="t" style="top:481px;font-size:12.6px;line-height:18px;color:#7c7c7c;letter-spacing:0.355px;left:722.00px;">Waiting...</span>
<div class="b" style="left:883.3px;top:489px;width:8.0px;height:1.5px;background:#808080;border-radius:0px;"></div>
<span class="t" style="top:481px;font-size:12.6px;line-height:18px;color:#7c7c7c;letter-spacing:-0.221px;left:1018.80px;">JPEG Im...</span>
<span class="t" style="top:481px;font-size:12.6px;line-height:18px;color:#6e6e6e;letter-spacing:-0.022px;left:1100.00px;">836 KB</span>
<div class="b" style="left:431.90px;top:514.64px;width:25.2px;height:25.2px;border:1.5px solid #8e8e8e;border-radius:5.5px;background:#fff;"></div>
<svg class="b" style="left:544.7px;top:514.94px;" width="17.2" height="21.8" viewBox="0 0 17.2 21.8"><path d="M0.6,0.5H11.2L16.6,5.9V21.3H0.6Z" fill="#fff" stroke="#cfcfcf" stroke-width="0.9" stroke-linejoin="round"/><path d="M11.2,0.5V5.9H16.6Z" fill="#eeeeee" stroke="#cfcfcf" stroke-width="0.9" stroke-linejoin="round"/><rect x="3.4" y="7.2" width="10" height="9.7" rx="1" fill="#2a7cd6"/><path d="M3.6,16.7V14.4L6.8,11.4L9.2,13.5L11.4,11.3L13.2,12.9V16.7Z" fill="#64b5f4"/><circle cx="10.9" cy="9.4" r="1" fill="#dbf0ff"/></svg>
<span class="t" style="top:518px;font-size:13.5px;line-height:19px;color:#1f1f1f;letter-spacing:0.320px;left:579.00px;">file 1920x1080_00...</span>
<span class="t" style="top:519px;font-size:12.6px;line-height:18px;color:#7c7c7c;letter-spacing:0.355px;left:722.00px;">Waiting...</span>
<div class="b" style="left:883.3px;top:527px;width:8.0px;height:1.5px;background:#808080;border-radius:0px;"></div>
<span class="t" style="top:519px;font-size:12.6px;line-height:18px;color:#7c7c7c;letter-spacing:-0.221px;left:1018.80px;">JPEG Im...</span>
<span class="t" style="top:519px;font-size:12.6px;line-height:18px;color:#6e6e6e;letter-spacing:-0.022px;left:1100.00px;">835 KB</span>
<svg class="b" style="left:431.90px;top:552.75px" width="25.2" height="25.2" viewBox="0 0 25.2 25.2"><rect width="25.2" height="25.2" rx="5.5" fill="#0f7df7"/><path d="M6.2,13.7L11,17.4L18.5,9.2" stroke="#fff" stroke-width="1.5" fill="none" stroke-linecap="round" stroke-linejoin="round"/></svg>
<svg class="b" style="left:544.7px;top:553.0500000000001px;" width="17.2" height="21.8" viewBox="0 0 17.2 21.8"><path d="M0.6,0.5H11.2L16.6,5.9V21.3H0.6Z" fill="#fff" stroke="#cfcfcf" stroke-width="0.9" stroke-linejoin="round"/><path d="M11.2,0.5V5.9H16.6Z" fill="#eeeeee" stroke="#cfcfcf" stroke-width="0.9" stroke-linejoin="round"/><rect x="3.4" y="7.2" width="10" height="9.7" rx="1" fill="#2a7cd6"/><path d="M3.6,16.7V14.4L6.8,11.4L9.2,13.5L11.4,11.3L13.2,12.9V16.7Z" fill="#64b5f4"/><circle cx="10.9" cy="9.4" r="1" fill="#dbf0ff"/></svg>
<span class="t" style="top:556px;font-size:13.5px;line-height:19px;color:#1f1f1f;letter-spacing:0.320px;left:579.00px;">file 1920x1080_00...</span>
<span class="t" style="top:557px;font-size:12.6px;line-height:18px;color:#7c7c7c;letter-spacing:0.355px;left:722.00px;">Waiting...</span>
<div class="b" style="left:883.3px;top:565px;width:8.0px;height:1.5px;background:#808080;border-radius:0px;"></div>
<span class="t" style="top:557px;font-size:12.6px;line-height:18px;color:#7c7c7c;letter-spacing:-0.221px;left:1018.80px;">JPEG Im...</span>
<span class="t" style="top:557px;font-size:12.6px;line-height:18px;color:#6e6e6e;letter-spacing:-0.022px;left:1100.00px;">837 KB</span>
<svg class="b" style="left:431.90px;top:590.86px" width="25.2" height="25.2" viewBox="0 0 25.2 25.2"><rect width="25.2" height="25.2" rx="5.5" fill="#0f7df7"/><path d="M6.2,13.7L11,17.4L18.5,9.2" stroke="#fff" stroke-width="1.5" fill="none" stroke-linecap="round" stroke-linejoin="round"/></svg>
<svg class="b" style="left:544.7px;top:591.1600000000001px;" width="17.2" height="21.8" viewBox="0 0 17.2 21.8"><path d="M0.6,0.5H11.2L16.6,5.9V21.3H0.6Z" fill="#fff" stroke="#cfcfcf" stroke-width="0.9" stroke-linejoin="round"/><path d="M11.2,0.5V5.9H16.6Z" fill="#eeeeee" stroke="#cfcfcf" stroke-width="0.9" stroke-linejoin="round"/><rect x="3.4" y="7.2" width="10" height="9.7" rx="1" fill="#2a7cd6"/><path d="M3.6,16.7V14.4L6.8,11.4L9.2,13.5L11.4,11.3L13.2,12.9V16.7Z" fill="#64b5f4"/><circle cx="10.9" cy="9.4" r="1" fill="#dbf0ff"/></svg>
<span class="t" style="top:594px;font-size:13.5px;line-height:19px;color:#1f1f1f;letter-spacing:0.320px;left:579.00px;">file 1920x1080_00...</span>
<span class="t" style="top:595px;font-size:12.6px;line-height:18px;color:#7c7c7c;letter-spacing:0.355px;left:722.00px;">Waiting...</span>
<div class="b" style="left:883.3px;top:603px;width:8.0px;height:1.5px;background:#808080;border-radius:0px;"></div>
<span class="t" style="top:595px;font-size:12.6px;line-height:18px;color:#7c7c7c;letter-spacing:-0.221px;left:1018.80px;">JPEG Im...</span>
<span class="t" style="top:595px;font-size:12.6px;line-height:18px;color:#6e6e6e;letter-spacing:-0.022px;left:1100.00px;">839 KB</span>
<div class="b" style="left:422.5px;top:621.8199999999999px;width:765.5px;height:36.799999999999955px;background:#dceefe;border-radius:4.5px;"></div>
<svg class="b" style="left:431.90px;top:628.97px" width="25.2" height="25.2" viewBox="0 0 25.2 25.2"><rect width="25.2" height="25.2" rx="5.5" fill="#0f7df7"/><path d="M6.2,13.7L11,17.4L18.5,9.2" stroke="#fff" stroke-width="1.5" fill="none" stroke-linecap="round" stroke-linejoin="round"/></svg>
<svg class="b" style="left:544.7px;top:629.27px;" width="17.2" height="21.8" viewBox="0 0 17.2 21.8"><path d="M0.6,0.5H11.2L16.6,5.9V21.3H0.6Z" fill="#fff" stroke="#cfcfcf" stroke-width="0.9" stroke-linejoin="round"/><path d="M11.2,0.5V5.9H16.6Z" fill="#eeeeee" stroke="#cfcfcf" stroke-width="0.9" stroke-linejoin="round"/><rect x="3.4" y="7.2" width="10" height="9.7" rx="1" fill="#2a7cd6"/><path d="M3.6,16.7V14.4L6.8,11.4L9.2,13.5L11.4,11.3L13.2,12.9V16.7Z" fill="#64b5f4"/><circle cx="10.9" cy="9.4" r="1" fill="#dbf0ff"/></svg>
<span class="t" style="top:632px;font-size:13.5px;line-height:19px;color:#1f1f1f;letter-spacing:0.320px;left:579.00px;">file 1920x1080_00...</span>
<span class="t" style="top:633px;font-size:12.6px;line-height:18px;color:#7c7c7c;letter-spacing:0.355px;left:722.00px;">Waiting...</span>
<div class="b" style="left:883.3px;top:641px;width:8.0px;height:1.5px;background:#808080;border-radius:0px;"></div>
<span class="t" style="top:633px;font-size:12.6px;line-height:18px;color:#7c7c7c;letter-spacing:-0.221px;left:1018.80px;">JPEG Im...</span>
<span class="t" style="top:633px;font-size:12.6px;line-height:18px;color:#6e6e6e;letter-spacing:-0.022px;left:1100.00px;">838 KB</span>
<div class="b" style="left:431.90px;top:667.08px;width:25.2px;height:25.2px;border:1.5px solid #8e8e8e;border-radius:5.5px;background:#fff;"></div>
<svg class="b" style="left:544.7px;top:667.3800000000001px;" width="17.2" height="21.8" viewBox="0 0 17.2 21.8"><path d="M0.6,0.5H11.2L16.6,5.9V21.3H0.6Z" fill="#fff" stroke="#cfcfcf" stroke-width="0.9" stroke-linejoin="round"/><path d="M11.2,0.5V5.9H16.6Z" fill="#eeeeee" stroke="#cfcfcf" stroke-width="0.9" stroke-linejoin="round"/><rect x="3.4" y="7.2" width="10" height="9.7" rx="1" fill="#2a7cd6"/><path d="M3.6,16.7V14.4L6.8,11.4L9.2,13.5L11.4,11.3L13.2,12.9V16.7Z" fill="#64b5f4"/><circle cx="10.9" cy="9.4" r="1" fill="#dbf0ff"/></svg>
<span class="t" style="top:670px;font-size:13.5px;line-height:19px;color:#1f1f1f;letter-spacing:0.320px;left:579.00px;">file 1920x1080_00...</span>
<span class="t" style="top:671px;font-size:12.6px;line-height:18px;color:#7c7c7c;letter-spacing:0.355px;left:722.00px;">Waiting...</span>
<div class="b" style="left:883.3px;top:679px;width:8.0px;height:1.5px;background:#808080;border-radius:0px;"></div>
<span class="t" style="top:671px;font-size:12.6px;line-height:18px;color:#7c7c7c;letter-spacing:-0.221px;left:1018.80px;">JPEG Im...</span>
<span class="t" style="top:671px;font-size:12.6px;line-height:18px;color:#6e6e6e;letter-spacing:-0.022px;left:1100.00px;">870 KB</span>
<svg class="b" style="left:431.90px;top:705.19px" width="25.2" height="25.2" viewBox="0 0 25.2 25.2"><rect width="25.2" height="25.2" rx="5.5" fill="#0f7df7"/><path d="M6.2,13.7L11,17.4L18.5,9.2" stroke="#fff" stroke-width="1.5" fill="none" stroke-linecap="round" stroke-linejoin="round"/></svg>
<svg class="b" style="left:544.7px;top:705.49px;" width="17.2" height="21.8" viewBox="0 0 17.2 21.8"><path d="M0.6,0.5H11.2L16.6,5.9V21.3H0.6Z" fill="#fff" stroke="#cfcfcf" stroke-width="0.9" stroke-linejoin="round"/><path d="M11.2,0.5V5.9H16.6Z" fill="#eeeeee" stroke="#cfcfcf" stroke-width="0.9" stroke-linejoin="round"/><rect x="3.4" y="7.2" width="10" height="9.7" rx="1" fill="#2a7cd6"/><path d="M3.6,16.7V14.4L6.8,11.4L9.2,13.5L11.4,11.3L13.2,12.9V16.7Z" fill="#64b5f4"/><circle cx="10.9" cy="9.4" r="1" fill="#dbf0ff"/></svg>
<span class="t" style="top:708px;font-size:13.5px;line-height:19px;color:#1f1f1f;letter-spacing:0.320px;left:579.00px;">file 1920x1080_00...</span>
<span class="t" style="top:709px;font-size:12.6px;line-height:18px;color:#7c7c7c;letter-spacing:0.355px;left:722.00px;">Waiting...</span>
<div class="b" style="left:883.3px;top:717px;width:8.0px;height:1.5px;background:#808080;border-radius:0px;"></div>
<span class="t" style="top:709px;font-size:12.6px;line-height:18px;color:#7c7c7c;letter-spacing:-0.221px;left:1018.80px;">JPEG Im...</span>
<span class="t" style="top:709px;font-size:12.6px;line-height:18px;color:#6e6e6e;letter-spacing:-0.022px;left:1100.00px;">838 KB</span>
<div class="b" style="left:431.90px;top:743.30px;width:25.2px;height:25.2px;border:1.5px solid #8e8e8e;border-radius:5.5px;background:#fff;"></div>
<svg class="b" style="left:544.7px;top:743.6000000000001px;" width="17.2" height="21.8" viewBox="0 0 17.2 21.8"><path d="M0.6,0.5H11.2L16.6,5.9V21.3H0.6Z" fill="#fff" stroke="#cfcfcf" stroke-width="0.9" stroke-linejoin="round"/><path d="M11.2,0.5V5.9H16.6Z" fill="#eeeeee" stroke="#cfcfcf" stroke-width="0.9" stroke-linejoin="round"/><rect x="3.4" y="7.2" width="10" height="9.7" rx="1" fill="#2a7cd6"/><path d="M3.6,16.7V14.4L6.8,11.4L9.2,13.5L11.4,11.3L13.2,12.9V16.7Z" fill="#64b5f4"/><circle cx="10.9" cy="9.4" r="1" fill="#dbf0ff"/></svg>
<span class="t" style="top:746px;font-size:13.5px;line-height:19px;color:#1f1f1f;letter-spacing:0.320px;left:579.00px;">file 1920x1080_00...</span>
<span class="t" style="top:747px;font-size:12.6px;line-height:18px;color:#7c7c7c;letter-spacing:0.355px;left:722.00px;">Waiting...</span>
<div class="b" style="left:883.3px;top:755px;width:8.0px;height:1.5px;background:#808080;border-radius:0px;"></div>
<span class="t" style="top:747px;font-size:12.6px;line-height:18px;color:#7c7c7c;letter-spacing:-0.221px;left:1018.80px;">JPEG Im...</span>
<span class="t" style="top:747px;font-size:12.6px;line-height:18px;color:#6e6e6e;letter-spacing:-0.022px;left:1100.00px;">836 KB</span>
<svg class="b" style="left:431.90px;top:781.41px" width="25.2" height="25.2" viewBox="0 0 25.2 25.2"><rect width="25.2" height="25.2" rx="5.5" fill="#0f7df7"/><path d="M6.2,13.7L11,17.4L18.5,9.2" stroke="#fff" stroke-width="1.5" fill="none" stroke-linecap="round" stroke-linejoin="round"/></svg>
<svg class="b" style="left:544.7px;top:781.71px;" width="17.2" height="21.8" viewBox="0 0 17.2 21.8"><path d="M0.6,0.5H11.2L16.6,5.9V21.3H0.6Z" fill="#fff" stroke="#cfcfcf" stroke-width="0.9" stroke-linejoin="round"/><path d="M11.2,0.5V5.9H16.6Z" fill="#eeeeee" stroke="#cfcfcf" stroke-width="0.9" stroke-linejoin="round"/><rect x="3.4" y="7.2" width="10" height="9.7" rx="1" fill="#2a7cd6"/><path d="M3.6,16.7V14.4L6.8,11.4L9.2,13.5L11.4,11.3L13.2,12.9V16.7Z" fill="#64b5f4"/><circle cx="10.9" cy="9.4" r="1" fill="#dbf0ff"/></svg>
<span class="t" style="top:784px;font-size:13.5px;line-height:19px;color:#1f1f1f;letter-spacing:0.320px;left:579.00px;">file 1920x1080_00...</span>
<span class="t" style="top:785px;font-size:12.6px;line-height:18px;color:#7c7c7c;letter-spacing:0.355px;left:722.00px;">Waiting...</span>
<div class="b" style="left:883.3px;top:793px;width:8.0px;height:1.5px;background:#808080;border-radius:0px;"></div>
<span class="t" style="top:785px;font-size:12.6px;line-height:18px;color:#7c7c7c;letter-spacing:-0.221px;left:1018.80px;">JPEG Im...</span>
<span class="t" style="top:785px;font-size:12.6px;line-height:18px;color:#6e6e6e;letter-spacing:-0.022px;left:1100.00px;">837 KB</span>
<div class="b" style="left:431.90px;top:819.52px;width:25.2px;height:25.2px;border:1.5px solid #8e8e8e;border-radius:5.5px;background:#fff;"></div>
<svg class="b" style="left:544.7px;top:819.82px;" width="17.2" height="21.8" viewBox="0 0 17.2 21.8"><path d="M0.6,0.5H11.2L16.6,5.9V21.3H0.6Z" fill="#fff" stroke="#cfcfcf" stroke-width="0.9" stroke-linejoin="round"/><path d="M11.2,0.5V5.9H16.6Z" fill="#eeeeee" stroke="#cfcfcf" stroke-width="0.9" stroke-linejoin="round"/><rect x="3.4" y="7.2" width="10" height="9.7" rx="1" fill="#2a7cd6"/><path d="M3.6,16.7V14.4L6.8,11.4L9.2,13.5L11.4,11.3L13.2,12.9V16.7Z" fill="#64b5f4"/><circle cx="10.9" cy="9.4" r="1" fill="#dbf0ff"/></svg>
<span class="t" style="top:821px;font-size:13.5px;line-height:19px;color:#1f1f1f;letter-spacing:0.320px;left:579.00px;">file 1920x1080_00...</span>
<span class="t" style="top:822px;font-size:12.6px;line-height:18px;color:#7c7c7c;letter-spacing:0.355px;left:722.00px;">Waiting...</span>
<div class="b" style="left:883.3px;top:832px;width:8.0px;height:1.5px;background:#808080;border-radius:0px;"></div>
<span class="t" style="top:822px;font-size:12.6px;line-height:18px;color:#7c7c7c;letter-spacing:-0.221px;left:1018.80px;">JPEG Im...</span>
<span class="t" style="top:822px;font-size:12.6px;line-height:18px;color:#6e6e6e;letter-spacing:-0.022px;left:1100.00px;">836 KB</span>
</div></div>
<div class="b" style="left:1195px;top:523.5px;width:6.2000000000000455px;height:39.5px;background:#c9c9c9;border-radius:3.1px;"></div>
<div class="b" style="left:1208px;top:305px;width:1px;height:531px;background:#efefef;border-radius:0px;"></div>
<svg class="b" style="left:1490px;top:315px;" width="20" height="20" viewBox="0 0 20 20"><path d="M9,3.2H5A2.6,2.6 0 0 0 2.4,5.8V15A2.6,2.6 0 0 0 5,17.6H14.2A2.6,2.6 0 0 0 16.8,15V11" stroke="#5a5a5a" stroke-width="1.6" fill="none" stroke-linecap="round"/><path d="M12,2.4H17.6V8M17.4,2.6L9.2,10.8" stroke="#5a5a5a" stroke-width="1.6" fill="none" stroke-linecap="round" stroke-linejoin="round"/></svg>
<svg class="b" style="left:1213.8px;top:372.8px" width="300.6" height="170.7" viewBox="0 0 301 171" preserveAspectRatio="none">
<defs>
<linearGradient id="sky" x1="0" y1="0" x2="0" y2="1"><stop offset="0" stop-color="#416d8d"/><stop offset="0.2" stop-color="#6a92a9"/><stop offset="0.42" stop-color="#9db7c0"/><stop offset="0.6" stop-color="#cfc4aa"/><stop offset="0.76" stop-color="#ecb873"/><stop offset="0.9" stop-color="#f0a24a"/><stop offset="1" stop-color="#ee8e38"/></linearGradient>
<radialGradient id="sun" cx="0.5" cy="0.5" r="0.5"><stop offset="0" stop-color="#fff8da"/><stop offset="0.1" stop-color="#ffe19a"/><stop offset="0.28" stop-color="#fbb650" stop-opacity="0.85"/><stop offset="0.6" stop-color="#f2923a" stop-opacity="0.4"/><stop offset="1" stop-color="#f08a30" stop-opacity="0"/></radialGradient>
<radialGradient id="glow" cx="0.5" cy="0.5" r="0.5"><stop offset="0" stop-color="#f59a3a" stop-opacity="0.95"/><stop offset="0.3" stop-color="#ec8832" stop-opacity="0.7"/><stop offset="0.65" stop-color="#e07a2c" stop-opacity="0.3"/><stop offset="1" stop-color="#e07a2c" stop-opacity="0"/></radialGradient>
<radialGradient id="rays" cx="0.5" cy="1" r="1"><stop offset="0" stop-color="#ffe9b8" stop-opacity="0.65"/><stop offset="0.3" stop-color="#f4e6c8" stop-opacity="0.42"/><stop offset="0.6" stop-color="#d6e4ea" stop-opacity="0.36"/><stop offset="1" stop-color="#d6e4ea" stop-opacity="0"/></radialGradient>
<linearGradient id="sand" x1="0.6" y1="0" x2="0" y2="1"><stop offset="0" stop-color="#c46a2c"/><stop offset="0.4" stop-color="#b5622f"/><stop offset="1" stop-color="#8d4323"/></linearGradient>
<linearGradient id="dune" x1="0.7" y1="0" x2="0.45" y2="1"><stop offset="0" stop-color="#59331f"/><stop offset="0.25" stop-color="#3f271c"/><stop offset="0.6" stop-color="#261a18"/><stop offset="1" stop-color="#191314"/></linearGradient>
<linearGradient id="lm" x1="0" y1="0" x2="1" y2="0"><stop offset="0" stop-color="#33262a"/><stop offset="0.5" stop-color="#553228"/><stop offset="1" stop-color="#8a4a26" stop-opacity="0.6"/></linearGradient>
<filter id="pb1"><feGaussianBlur stdDeviation="0.7"/></filter><filter id="pb3"><feGaussianBlur stdDeviation="2.5"/></filter>
<clipPath id="pc"><rect width="301" height="171"/></clipPath>
</defs>
<g clip-path="url(#pc)">
<rect width="301" height="68.5" fill="url(#sky)"/>
<ellipse cx="150" cy="68" rx="235" ry="125" fill="url(#rays)"/>
<rect y="67" width="301" height="104" fill="url(#sand)"/>
<ellipse cx="150" cy="74" rx="110" ry="24" fill="url(#glow)"/>
<g filter="url(#pb1)" opacity="0.85">
<path d="M7.8,38C11,34.5 20,34.5 26.2,42C19,43 12,42 7.8,38Z" fill="#6f504c"/>
<path d="M31,36.5C34,35.3 39,36 41,38C37,38.6 33,38.4 31,36.5Z" fill="#d2b094"/>
<path d="M59,45.2C66,43.6 73,44 77.5,46.2C72,47.6 64,47.4 59,45.2Z" fill="#8a5c44"/>
<path d="M81.5,47.5C92,43.6 108,41.8 114,45C120,46.5 121,49.5 112,50C102,50.8 90,50.6 81.5,47.5Z" fill="#7c4e38"/>
<path d="M114,49C122,47.8 130,48.4 134,50.4C128,51.6 120,51.2 114,49Z" fill="#a8684a"/>
<path d="M167.6,53.4C171,51.4 176,51.4 178.3,54C175,55.4 171,55.2 167.6,53.4Z" fill="#8a563c"/>
<path d="M199.6,57C203,55.4 208,55.4 211,57.2C207,58.6 203,58.6 199.6,57Z" fill="#8a5e4a"/>
<path d="M208,59C226,55.6 252,55.4 265.5,58C252,61 238,60.4 226,63C219,62.6 212,61.6 208,59Z" fill="#7d584c"/>
<path d="M257.8,62.6C268,60.6 278,60.6 285,62.2C276,64.6 266,64.6 257.8,62.6Z" fill="#8a604e"/>
<path d="M289,55.4C293,54 298,54.2 301,55V58.4C296,58.6 292,57.4 289,55.4Z" fill="#b48a76"/>
<path d="M287,62.4C292,61 298,61 301,61.6V65C296,65.2 291,64.4 287,62.4Z" fill="#8a5e4c"/>
</g>
<g filter="url(#pb1)">
<path d="M0,68C10,66.6 24,67.6 36,70C40,66.4 52,66 58,70.6C70,69.4 88,71 100,73.6C112,74.6 124,78 128,83C110,89 60,91.6 0,92.6Z" fill="url(#lm)"/>
<path d="M0,80C30,78.6 70,80.6 122,84.6C100,91 50,94 0,94.6Z" fill="#4a2c25" opacity="0.75"/>
<path d="M155,93.4C160,87.4 170,85 182,82.6C190,78.6 202,78 206,83C209,89 207,93.6 200,94.6C186,96.6 166,96.6 155,93.4Z" fill="#4b2a21"/>
<path d="M180,78.4C182,75.4 190,75.2 194,78.2C194,80.4 184,80.6 180,78.4Z" fill="#6c3a26" opacity="0.9"/>
<path d="M219,91C219.6,80 223,70.6 228,68.6C231,67.4 233,70 235,69.4C238,67.6 242,69 244,74C246,79.6 248.6,86 248.4,90.4C240,93.6 226,93.6 219,91Z" fill="#2f1d1b"/>
<path d="M84,96C87,90.6 99,89.8 103.8,95.4C99,98.4 90,98.6 84,96Z" fill="#50302a"/>
<path d="M155,103.6C157,101.4 161,101.6 162,103.8C160,105 157,105 155,103.6Z" fill="#5a3024"/>
<path d="M289,76C292,72 297,71 301,72V80H289Z" fill="#3a221e"/>
<path d="M252,83C258,79.4 268,79.6 272,82.6C268,85.6 258,86 252,83Z" fill="#6c3e2c" opacity="0.75"/>
</g>
<ellipse cx="147" cy="63.6" rx="42" ry="24" fill="url(#sun)"/>
<circle cx="147" cy="63.6" r="2.7" fill="#fffbe8" filter="url(#pb1)"/>
<path d="M0,137.2Q150,101 301,80.4V172H0Z" fill="url(#dune)"/>
<path d="M0,137.2Q150,101 301,80.4" stroke="#d87c38" stroke-width="1.2" stroke-opacity="0.7" fill="none" filter="url(#pb1)"/>
<path d="M130,108.6Q215,91 301,80.6" stroke="#f4a254" stroke-width="1.1" stroke-opacity="0.85" fill="none" filter="url(#pb1)"/>
<path d="M64.6,105.4C66,105 67,105.8 66.8,107.2L67.6,109.6L67.8,114.6L66.6,119.4L67.6,128.6L65.8,128.8L64.4,121.6L61.6,128.8L59.4,128.6L62,119.6L61.6,112.4L62.6,108.4Z" fill="#17110f"/>
</g>
</svg>
<span class="t" style="top:586px;font-size:19.3px;line-height:25px;color:#111;letter-spacing:0.432px;left:1227.20px;-webkit-text-stroke:0.5px #111;">file 1920x1080_000072.jpg</span>
<span class="t" style="top:618px;font-size:15px;line-height:21px;color:#6b6b6b;letter-spacing:-0.153px;left:1227.20px;">JPEG Image – 838 KB</span>
<span class="t" style="top:645px;font-size:15px;line-height:21px;color:#6b6b6b;letter-spacing:0.655px;left:1227.20px;">Date modified Unknown</span>
<span class="t" style="top:689px;font-size:15px;line-height:21px;color:#111;letter-spacing:0.211px;left:1227.20px;-webkit-text-stroke:0.45px #111;">Path</span>
<span class="t" style="top:711px;font-size:12.6px;line-height:18px;color:#737373;letter-spacing:0.626px;left:1227.20px;">\Reconstructed\Pictures\jpg\file</span>
<span class="t" style="top:729px;font-size:12.6px;line-height:18px;color:#737373;letter-spacing:0.329px;left:1227.20px;">1920x1080_000072.jpg</span>
<span class="t" style="top:771px;font-size:15px;line-height:21px;color:#111;letter-spacing:0.332px;left:1227.20px;-webkit-text-stroke:0.45px #111;">Recovery chances</span>
<span class="t" style="top:792px;font-size:15px;line-height:21px;color:#6b6b6b;letter-spacing:0.264px;left:1227.20px;">Waiting...</span>
<div class="b" style="left:405px;top:836px;width:1115px;height:1.1000000000000227px;background:#ececec;border-radius:0px;"></div>
<span class="t" style="top:856px;font-size:15.3px;line-height:21px;color:#8a8a8a;letter-spacing:0.296px;left:429.30px;">0h 2m elapsed, 1h 42m remain, block 55423465 of 1658014308</span>
<span class="t" style="top:855px;font-size:15.3px;line-height:21px;color:#666;letter-spacing:0.200px;left:1053.50px;">7 files (5.76 MB) selected, 338921 files total</span>
<div class="b" style="left:1384px;top:847.3px;width:126px;height:35.0px;background:#0f7df7;border-radius:4.5px;"></div>
<span class="t" style="top:855px;font-size:15.3px;line-height:21px;color:#fff;letter-spacing:-0.196px;left:1418.80px;">Recover</span>
</div>
</body></html>
